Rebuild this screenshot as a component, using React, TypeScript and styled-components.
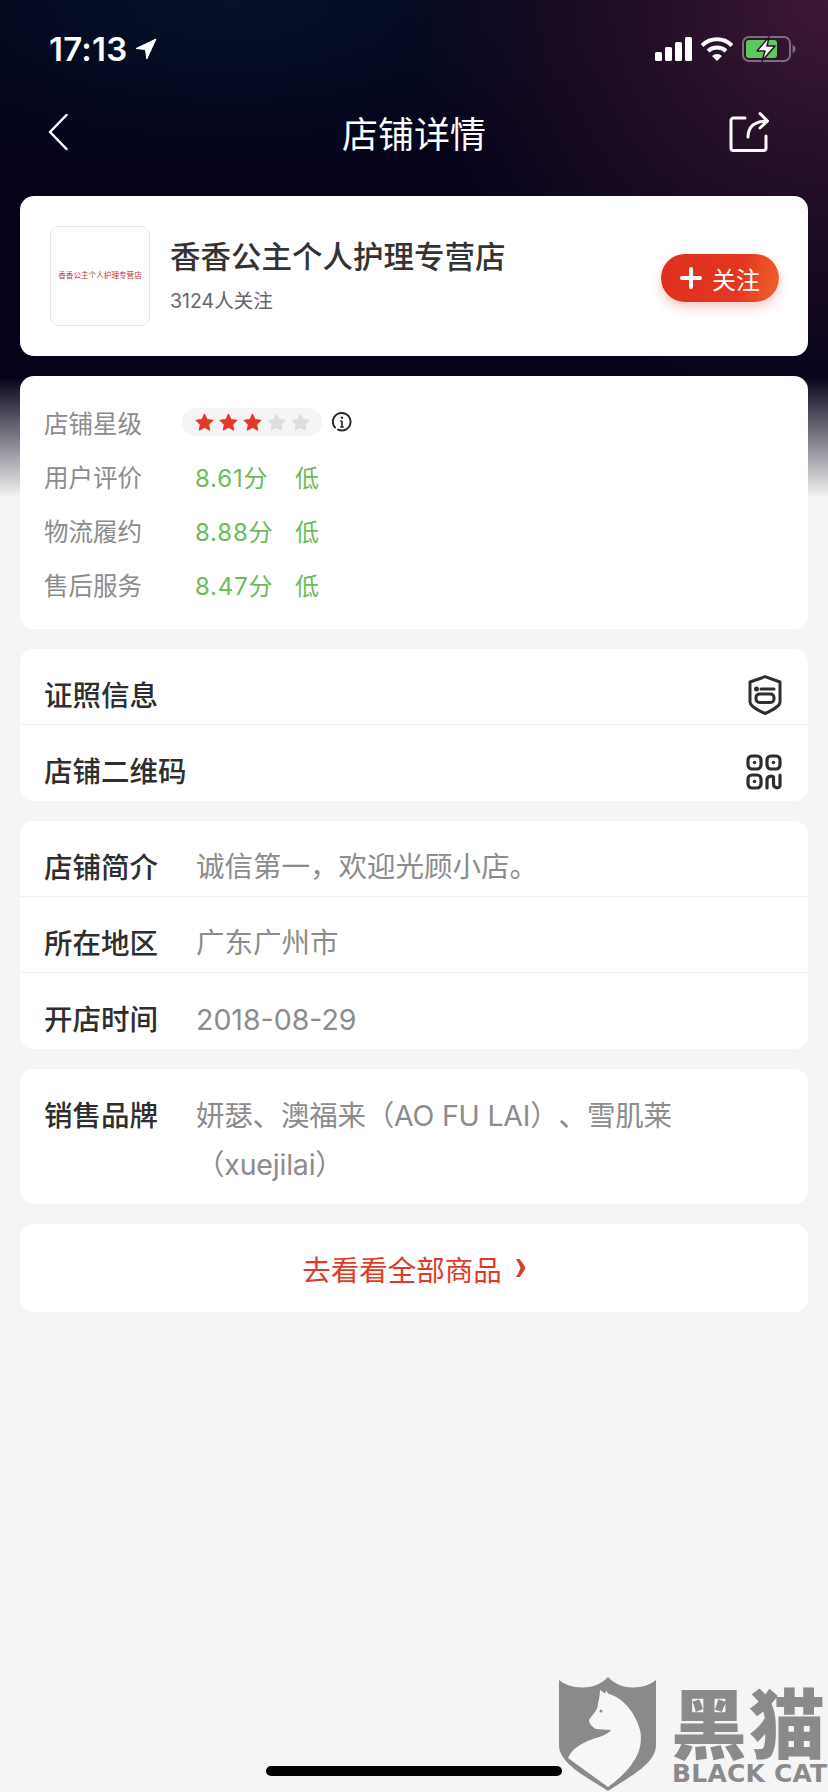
import React from "react";
import styled, { createGlobalStyle } from "styled-components";

const SANS = `Inter, "Noto Sans CJK SC", sans-serif`;
const CJK_FIRST = `"Noto Sans CJK SC", sans-serif`;

const GlobalStyle = createGlobalStyle`
  html, body { margin: 0; padding: 0; background: #f5f5f5; }
  * { box-sizing: border-box; }
`;

const Page = styled.div`
  position: relative;
  width: 828px;
  height: 1792px;
  overflow: hidden;
  font-family: ${SANS};
  text-spacing-trim: space-all;
  background:
    linear-gradient(to bottom, rgba(245,245,245,0) 378px, #f5f5f5 498px),
    radial-gradient(ellipse 420px 420px at 828px 0, rgba(62,24,54,1) 0%, rgba(38,16,40,0.85) 45%, rgba(20,8,30,0) 100%),
    radial-gradient(ellipse 420px 170px at 230px 0, rgba(6,26,48,0.65) 0%, rgba(6,22,44,0) 100%),
    #04031a;
`;

const StatusBar = styled.div`
  height: 98px;
  display: flex;
  align-items: center;
  justify-content: space-between;
  padding: 0 32px 0 49px;
  color: #fff;
`;
const TimeGroup = styled.div`
  display: flex;
  align-items: center;
  gap: 8px;
`;
const Time = styled.span`
  font-size: 33px;
  font-weight: 600;
  letter-spacing: 0.2px;
  line-height: 1;
`;
const StatusIcons = styled.div`
  display: flex;
  align-items: center;
  gap: 9px;
`;

const Nav = styled.div`
  height: 68px;
  margin-bottom: 30px;
  padding: 0 48px;
  display: grid;
  grid-template-columns: 1fr auto 1fr;
  align-items: center;
`;
const NavRight = styled.div`
  display: flex;
  justify-content: flex-end;
  padding-right: 11px;
`;
const NavTitle = styled.h1`
  margin: 0;
  font-family: ${CJK_FIRST};
  font-size: 36px;
  font-weight: 400;
  color: #fff;
  line-height: 1;
`;

const Cards = styled.div`
  display: flex;
  flex-direction: column;
  gap: 20px;
  padding: 0 20px;
`;
const Card = styled.section`
  background: #fff;
  border-radius: 14px;
  overflow: hidden;
`;

const ShopCard = styled(Card)`
  height: 160px;
  padding: 0 29px 0 30px;
  display: flex;
  align-items: center;
`;
const Logo = styled.div`
  width: 100px;
  height: 100px;
  flex: none;
  border: 1px solid #e6e6e6;
  border-radius: 9px;
  display: flex;
  align-items: center;
  justify-content: center;
  padding-bottom: 4px;
  font-family: "Liberation Serif", ${CJK_FIRST};
  font-size: 7.6px;
  white-space: nowrap;
  color: #c2323a;
`;
const ShopInfo = styled.div`
  flex: 1;
  margin: 0 0 4px 20px;
  display: flex;
  flex-direction: column;
  gap: 11px;
`;
const ShopName = styled.div`
  font-family: ${CJK_FIRST};
  font-size: 30.5px;
  line-height: 42px;
  font-weight: 500;
  color: #333;
`;
const Followers = styled.div`
  font-size: 19.5px;
  line-height: 28px;
  color: #64656d;
`;
const FollowButton = styled.div`
  width: 118px;
  height: 48px;
  margin-top: 4px;
  border-radius: 24px;
  background: linear-gradient(100deg, #df301f 0%, #e2371f 65%, #f0622f 100%);
  box-shadow: 0 6px 12px rgba(226, 60, 35, 0.25);
  display: flex;
  align-items: center;
  justify-content: center;
  gap: 10px;
  font-family: ${CJK_FIRST};
  font-size: 24px;
  color: #fff;
`;

const ScoreCard = styled(Card)`
  height: 253px;
  padding: 19px 24px 0;
`;
const ScoreRow = styled.div`
  height: 54px;
  display: flex;
  align-items: center;
  font-size: 24px;
`;
const ScoreLabel = styled.span`
  width: 138px;
  flex: none;
  font-family: ${CJK_FIRST};
  font-size: 24.5px;
  color: #8c8c8c;
`;
const ScoreValue = styled.span`
  width: 100px;
  flex: none;
  margin-left: 13px;
  color: #6cbb5a;
  letter-spacing: 0.8px;
`;
const ScoreLevel = styled.span`
  font-family: ${CJK_FIRST};
  color: #6cbb5a;
`;
const StarPill = styled.div`
  width: 140px;
  height: 28px;
  border-radius: 14px;
  background: #f5f5f5;
  display: flex;
  align-items: center;
  padding-left: 13px;
  gap: 5px;
`;
const InfoWrap = styled.div`
  margin-left: 10px;
  display: flex;
`;

const Row = styled.div<{ $last?: boolean }>`
  height: 76px;
  padding: 14px 26px 0 24px;
  display: flex;
  align-items: center;
  border-bottom: ${(p) => (p.$last ? "none" : "1px solid #f2f2f2")};
`;
const RowTitle = styled.span`
  width: 152px;
  flex: none;
  font-family: ${CJK_FIRST};
  font-size: 28.5px;
  line-height: 40px;
  font-weight: 500;
  color: #2e2e2e;
`;
const LinkTitle = styled(RowTitle)`
  width: auto;
`;
const RowValue = styled.span`
  flex: 1;
  padding-top: 2px;
  font-size: 28.5px;
  line-height: 49px;
  color: #8c8c8c;
`;
const BrandValue = styled(RowValue)`
  letter-spacing: -0.2px;
`;
const LinkRow = styled(Row)`
  justify-content: space-between;
`;
const LinkIcon = styled.div`
  display: flex;
  margin-top: 3px;
`;
const BrandRow = styled.div`
  height: 135px;
  padding: 20px 30px 0 24px;
  display: flex;
  align-items: flex-start;
`;
const BrandTitle = styled(RowTitle)`
  line-height: 49px;
`;
const AllGoods = styled(Card)`
  height: 88px;
  display: flex;
  align-items: center;
  justify-content: center;
  gap: 13px;
  font-family: ${CJK_FIRST};
  font-size: 28.5px;
  color: #e03a26;
`;

const HomeBar = styled.div`
  position: absolute;
  left: 266px;
  top: 1766px;
  width: 296px;
  height: 10px;
  border-radius: 5px;
  background: #000;
`;
const Watermark = styled.div`
  position: absolute;
  left: 559px;
  top: 1677px;
  width: 269px;
  height: 115px;
  color: #8a8a8a;
`;
const ShieldWrap = styled.div`
  position: absolute;
  left: 0;
  top: 0;
`;
const MarkName = styled.div`
  position: absolute;
  left: 112px;
  top: 3px;
  font-family: ${CJK_FIRST};
  font-size: 76px;
  line-height: 80px;
  font-weight: 900;
  letter-spacing: 2px;
  white-space: nowrap;
`;
const MarkLatin = styled.div`
  position: absolute;
  left: 113px;
  top: 84px;
  font-family: "DejaVu Sans", sans-serif;
  font-size: 25px;
  line-height: 26px;
  font-weight: 700;
  white-space: nowrap;
  letter-spacing: 0.2px;
`;

const Star = ({ on }: { on: boolean }) => (
  <svg width="19" height="19" viewBox="0 0 18 18">
    <path
      d="M9 1.2l2.4 5 5.5.7-4 3.8 1 5.5L9 13.5l-4.900 2.700 1-5.500-4-3.800 5.500-.7z"
      fill={on ? "#e03a26" : "#dedede"}
      stroke={on ? "#e03a26" : "#dedede"}
      strokeWidth="1"
      strokeLinejoin="round"
    />
  </svg>
);

const scores = [
  { label: "用户评价", value: "8.61分" },
  { label: "物流履约", value: "8.88分" },
  { label: "售后服务", value: "8.47分" },
];

export default function App() {
  return (
    <Page lang="zh-CN">
      <GlobalStyle />
      <StatusBar>
        <TimeGroup>
          <Time>17:13</Time>
          <svg width="22" height="22" viewBox="0 0 22 22">
            <path d="M21 1L1 10.500l9.500 1 1.300 9.500z" fill="#fff" stroke="#fff" strokeLinejoin="round" />
          </svg>
        </TimeGroup>
        <StatusIcons>
          <svg width="37" height="24" viewBox="0 0 37 24" fill="#fff">
            <rect x="0" y="15" width="7" height="9" rx="1.500" />
            <rect x="10" y="10" width="7" height="14" rx="1.500" />
            <rect x="20" y="5" width="7" height="19" rx="1.500" />
            <rect x="30" y="0" width="7" height="24" rx="1.500" />
          </svg>
          <svg width="32" height="24" viewBox="0 0 32 24" fill="none" stroke="#fff" strokeWidth="4">
            <path d="M1 8.500a21 21 0 0 1 30 0" />
            <path d="M7 14a13 13 0 0 1 18 0" />
            <path d="M16 24l-5-5a7 7 0 0 1 10 0z" fill="#fff" stroke="none" />
          </svg>
          <svg width="54" height="26" viewBox="0 0 54 26" fill="none">
            <rect x="1" y="1" width="47" height="24" rx="6" stroke="#7d6d7c" strokeWidth="2" />
            <path d="M50.500 9c2 .5 3 2 3 4s-1 3.500-3 4z" fill="#7d6d7c" />
            <rect x="4" y="4" width="31" height="18" rx="3" fill="#5fc75f" />
            <path d="M27 1L15 15h8l-3 10 13-15h-8z" fill="#fff" stroke="#2a1228" strokeWidth="1.500" strokeLinejoin="round" />
          </svg>
        </StatusIcons>
      </StatusBar>

      <Nav>
        <svg width="20" height="38" viewBox="0 0 20 38" fill="none" stroke="#fff" strokeWidth="2.500" strokeLinecap="round" strokeLinejoin="round">
          <path d="M18.500 2L2 19l16.500 17" />
        </svg>
        <NavTitle>店铺详情</NavTitle>
        <NavRight>
          <svg width="40" height="42" viewBox="0 0 40 42" fill="none" stroke="#fff" strokeWidth="3" strokeLinecap="round" strokeLinejoin="round">
            <path d="M16 7H4.500A2.500 2.500 0 0 0 2 9.500V37a2.500 2.500 0 0 0 2.500 2.500h30A2.500 2.500 0 0 0 37 37V25" />
            <path d="M19 26c0-10 6-15.500 18-16" />
            <path d="M31 2.500L38.500 10 31 17" />
          </svg>
        </NavRight>
      </Nav>

      <Cards>
        <ShopCard>
          <Logo>香香公主个人护理专营店</Logo>
          <ShopInfo>
            <ShopName>香香公主个人护理专营店</ShopName>
            <Followers>3124人关注</Followers>
          </ShopInfo>
          <FollowButton>
            <svg width="22" height="22" viewBox="0 0 22 22" stroke="#fff" strokeWidth="4" strokeLinecap="round">
              <path d="M11 2v18M2 11h18" />
            </svg>
            关注
          </FollowButton>
        </ShopCard>

        <ScoreCard>
          <ScoreRow>
            <ScoreLabel>店铺星级</ScoreLabel>
            <StarPill>
              <Star on />
              <Star on />
              <Star on />
              <Star on={false} />
              <Star on={false} />
            </StarPill>
            <InfoWrap>
              <svg width="20" height="20" viewBox="0 0 20 20" fill="none" stroke="#2b2b2b" strokeWidth="2">
                <path d="M6 17.700A8.800 8.800 0 1 0 3 15.400" strokeLinecap="round" />
                <path d="M10 9v6M8.200 9H10M8.200 15h3.600" strokeWidth="1.700" />
                <circle cx="10" cy="5.700" r="1.200" fill="#2b2b2b" stroke="none" />
              </svg>
            </InfoWrap>
          </ScoreRow>
          {scores.map((s) => (
            <ScoreRow key={s.label}>
              <ScoreLabel>{s.label}</ScoreLabel>
              <ScoreValue>{s.value}</ScoreValue>
              <ScoreLevel>低</ScoreLevel>
            </ScoreRow>
          ))}
        </ScoreCard>

        <Card>
          <LinkRow>
            <LinkTitle>证照信息</LinkTitle>
            <LinkIcon>
              <svg width="34" height="40" viewBox="0 0 34 40" fill="none" stroke="#2e2e2e" strokeWidth="3" strokeLinecap="round" strokeLinejoin="round">
                <path d="M17 1.700L32 7v20c0 4-9 9-15 11.500C11 36 2 31 2 27V7z" />
                <path d="M13 14h13" />
                <circle cx="8.500" cy="14" r="1" fill="#2e2e2e" />
                <rect x="8" y="19" width="18" height="8.500" rx="3.500" />
              </svg>
            </LinkIcon>
          </LinkRow>
          <LinkRow $last>
            <LinkTitle>店铺二维码</LinkTitle>
            <LinkIcon>
              <svg width="36" height="36" viewBox="0 0 36 36" fill="none" stroke="#2e2e2e" strokeWidth="3.200" strokeLinecap="round">
                <rect x="2" y="2" width="13" height="13" rx="4" />
                <rect x="21" y="2" width="13" height="13" rx="4" />
                <rect x="2" y="21" width="13" height="13" rx="4" />
                <circle cx="8.500" cy="8.500" r="1.800" fill="#2e2e2e" stroke="none" />
                <circle cx="27.500" cy="8.500" r="1.800" fill="#2e2e2e" stroke="none" />
                <circle cx="8.500" cy="27.500" r="1.800" fill="#2e2e2e" stroke="none" />
                <path d="M21 34V26a4 4 0 0 1 6.500-3V30a3.500 3.500 0 0 0 6.500 2V21" />
              </svg>
            </LinkIcon>
          </LinkRow>
        </Card>

        <Card>
          <Row>
            <RowTitle>店铺简介</RowTitle>
            <RowValue>诚信第一，欢迎光顾小店。</RowValue>
          </Row>
          <Row>
            <RowTitle>所在地区</RowTitle>
            <RowValue>广东广州市</RowValue>
          </Row>
          <Row $last>
            <RowTitle>开店时间</RowTitle>
            <RowValue>2018-08-29</RowValue>
          </Row>
        </Card>

        <Card>
          <BrandRow>
            <BrandTitle>销售品牌</BrandTitle>
            <BrandValue>妍瑟、澳福来（AO FU LAI）、雪肌莱（xuejilai）</BrandValue>
          </BrandRow>
        </Card>

        <AllGoods>
          去看看全部商品
          <svg width="11" height="20" viewBox="0 0 11 20" fill="#e03a26">
            <path d="M1 1h3.500C7 4 9 7 10.500 10 9 13 7 16 4.500 19H1c2-3 3.500-6 4.500-9C4.500 7 3 4 1 1z" />
          </svg>
        </AllGoods>
      </Cards>

      <Watermark>
        <ShieldWrap>
          <svg width="97" height="114" viewBox="0 0 97 114">
            <path d="M0 3C10 12 36 15 49 0C62 15 87 12 97 3V68C97 88 66 102 49 114C32 102 0 88 0 68Z" fill="#8a8a8a" />
            <path d="M41 13L46 16.500L47 14L50 17C62 20 76 34 81 53C85 72 76 90 49 110L9 81C13 72 22 66 34 62C43 59 49 57 52 53L37 52C33 50 30 46 30 43C34 37 39 33 39 27C40 22 41 18 41 13Z" fill="#f7f7f7" />
            <circle cx="42" cy="34" r="1.500" fill="#8a8a8a" />
          </svg>
        </ShieldWrap>
        <MarkName>黑猫</MarkName>
        <MarkLatin>BLACK CAT</MarkLatin>
      </Watermark>
      <HomeBar />
    </Page>
  );
}
